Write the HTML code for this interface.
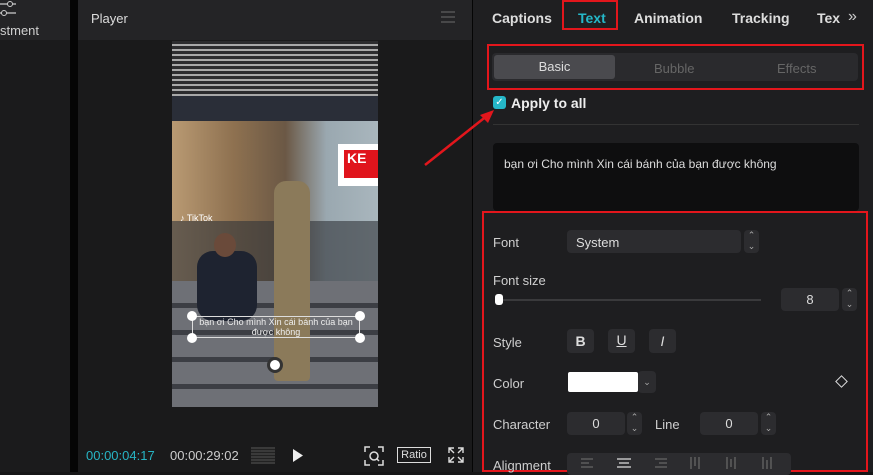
<!DOCTYPE html>
<html><head><meta charset="utf-8"><style>
*{margin:0;padding:0;box-sizing:border-box}
body{width:873px;height:472px;overflow:hidden;background:#161617;font-family:"Liberation Sans","DejaVu Sans",sans-serif;position:relative;color:#ddd}
.a{position:absolute}
.lbl{font-size:13px;color:#cfcfcf}
.box{background:#2c2c2f;border-radius:4px}
.red{border:2px solid #e3161c}
.spin{background:#2c2c2f;border-radius:4px;width:15px;height:23px;color:#aaa;font-size:9px;text-align:center;line-height:11px}
</style></head><body>
<div class="a" style="left:0;top:0;width:70px;height:40px;background:#242426"></div>
<div class="a" style="left:0;top:40px;width:70px;height:432px;background:#1b1b1c"></div>
<div class="a lbl" style="left:0;top:23px;font-size:13px">stment</div>
<svg class="a" style="left:0;top:0" width="20" height="18"><path d="M0 4H16M0 13H16" stroke="#ccc" stroke-width="1.2"/><circle cx="10" cy="4" r="2.5" fill="#242426" stroke="#ccc"/><circle cx="4" cy="13" r="2.5" fill="#242426" stroke="#ccc"/></svg>
<div class="a" style="left:70px;top:0;width:8px;height:472px;background:#050505"></div>
<div class="a" style="left:78px;top:0;width:394px;height:40px;background:#242426"></div>
<div class="a" style="left:78px;top:40px;width:394px;height:432px;background:#1a1a1b"></div>
<div class="a" style="left:91px;top:11px;font-size:13px;color:#ddd">Player</div>
<svg class="a" style="left:440px;top:10px" width="16" height="14"><path d="M1 2H15M1 7H15M1 12H15" stroke="#555" stroke-width="1.5"/></svg>
<div class="a" style="left:172px;top:41px;width:206px;height:366px;overflow:hidden;background:#555">
 <div class="a" style="left:0;top:0;width:206px;height:55px;background:repeating-linear-gradient(#2c2c2e 0 3px,#a8a8a8 3px 5px)"></div>
 <div class="a" style="left:0;top:55px;width:206px;height:25px;background:#2a2e38"></div>
 <div class="a" style="left:0;top:80px;width:206px;height:170px;background:linear-gradient(90deg,#b99a73 0,#8e7150 30%,#6b5845 55%,#9aa8b0 75%,#a9b6bd 100%)"></div>
 <div class="a" style="left:166px;top:103px;width:40px;height:42px;background:#fff"></div>
 <div class="a" style="left:172px;top:109px;width:34px;height:28px;background:#e0141c;color:#fff;font-weight:bold;font-size:14px;padding-left:3px">KE</div>
 <div class="a" style="left:0;top:180px;width:206px;height:60px;background:#303438;opacity:.6"></div>
 <div class="a" style="left:0;top:240px;width:206px;height:126px;background:repeating-linear-gradient(#6e7076 0 22px,#3c3e44 22px 27px)"></div>
 <div class="a" style="left:102px;top:140px;width:36px;height:200px;background:#8b7a5a;border-radius:12px 12px 4px 4px"></div>
 <div class="a" style="left:25px;top:210px;width:60px;height:70px;background:#1e2330;border-radius:16px"></div>
 <div class="a" style="left:42px;top:192px;width:22px;height:24px;background:#6a4a3a;border-radius:50%"></div>
 <div class="a" style="left:8px;top:172px;font-size:9px;color:#fff">♪ TikTok</div>
 <div class="a" style="left:20px;top:275px;width:168px;height:22px;border:1px solid #ddd;font-size:9px;color:#eee;text-align:center;line-height:10px">bạn ơi Cho mình Xin cái bánh của bạn được không</div>
 <div class="a" style="left:15px;top:270px;width:10px;height:10px;border-radius:50%;background:#fff"></div>
 <div class="a" style="left:183px;top:270px;width:10px;height:10px;border-radius:50%;background:#fff"></div>
 <div class="a" style="left:15px;top:292px;width:10px;height:10px;border-radius:50%;background:#fff"></div>
 <div class="a" style="left:183px;top:292px;width:10px;height:10px;border-radius:50%;background:#fff"></div>
 <div class="a" style="left:95px;top:316px;width:16px;height:16px;border-radius:50%;background:#fff;border:3px solid #333"></div>
</div>
<div class="a" style="left:86px;top:448px;font-size:13px;color:#27b4c4">00:00:04:17</div>
<div class="a" style="left:170px;top:448px;font-size:13px;color:#ccc">00:00:29:02</div>
<div class="a" style="left:251px;top:447px;width:24px;height:17px;background:repeating-linear-gradient(#3a3a3a 0 2px,#222 2px 3px)"></div>
<svg class="a" style="left:292px;top:448px" width="12" height="15"><path d="M1 1L11 7.5L1 14Z" fill="#eee"/></svg>
<svg class="a" style="left:364px;top:446px" width="20" height="20"><path d="M1 6V1H6M14 1H19V6M19 14V19H14M6 19H1V14" stroke="#ddd" fill="none" stroke-width="1.5"/><circle cx="10" cy="10" r="4" stroke="#ddd" fill="none" stroke-width="1.5"/><path d="M13 13L15 15" stroke="#ddd" stroke-width="1.5"/></svg>
<div class="a" style="left:397px;top:447px;width:34px;height:16px;border:1px solid #ddd;font-size:11px;color:#ddd;text-align:center;line-height:14px">Ratio</div>
<svg class="a" style="left:448px;top:447px" width="16" height="16"><path d="M1 6V1H6M1 1L6 6M10 1H15V6M15 1L10 6M15 10V15H10M15 15L10 10M6 15H1V10M1 15L6 10" stroke="#ddd" fill="none" stroke-width="1.4"/></svg>
<div class="a" style="left:472px;top:0;width:1px;height:472px;background:#050505"></div>
<div class="a" style="left:473px;top:0;width:400px;height:40px;background:#1f1f21"></div>
<div class="a" style="left:473px;top:40px;width:400px;height:432px;background:#1e1e20"></div>
<div class="a" style="left:492px;top:10px;font-size:14px;font-weight:bold;color:#ddd">Captions</div>
<div class="a red" style="left:562px;top:0;width:56px;height:30px"></div>
<div class="a" style="left:578px;top:10px;font-size:14px;font-weight:bold;color:#25b7c8">Text</div>
<div class="a" style="left:634px;top:10px;font-size:14px;font-weight:bold;color:#ddd">Animation</div>
<div class="a" style="left:732px;top:10px;font-size:14px;font-weight:bold;color:#ddd">Tracking</div>
<div class="a" style="left:817px;top:10px;font-size:14px;font-weight:bold;color:#ddd">Tex</div>
<div class="a" style="left:848px;top:8px;font-size:16px;color:#ccc">»</div>
<div class="a red" style="left:487px;top:44px;width:377px;height:46px"></div>
<div class="a" style="left:492px;top:53px;width:366px;height:28px;background:#2a2a2d;border-radius:4px"></div>
<div class="a" style="left:494px;top:55px;width:121px;height:24px;background:#4a4a4e;border-radius:3px;font-size:13px;color:#ddd;text-align:center;line-height:24px">Basic</div>
<div class="a" style="left:654px;top:61px;font-size:13px;color:#666">Bubble</div>
<div class="a" style="left:777px;top:61px;font-size:13px;color:#666">Effects</div>
<div class="a" style="left:493px;top:96px;width:13px;height:13px;background:#25b7c8;border-radius:3px;color:#fff;font-size:10px;line-height:13px;text-align:center">✓</div>
<div class="a" style="left:511px;top:95px;font-size:14px;font-weight:bold;color:#eee">Apply to all</div>
<div class="a" style="left:493px;top:124px;width:366px;height:1px;background:#333"></div>
<div class="a" style="left:493px;top:143px;width:366px;height:68px;background:#0e0e0f;border-radius:4px"></div>
<div class="a" style="left:504px;top:157px;font-size:12px;color:#ddd">bạn ơi Cho mình Xin cái bánh của bạn được không</div>
<div class="a red" style="left:482px;top:211px;width:386px;height:261px;border-bottom:2px solid #e3161c"></div>
<div class="a lbl" style="left:493px;top:235px">Font</div>
<div class="a box" style="left:567px;top:230px;width:174px;height:23px;font-size:13px;color:#ddd;padding:5px 9px">System</div>
<div class="a spin" style="left:744px;top:230px">⌃<br>⌄</div>
<div class="a lbl" style="left:493px;top:273px">Font size</div>
<div class="a" style="left:495px;top:299px;width:266px;height:2px;background:#3a3a3c"></div>
<div class="a" style="left:495px;top:294px;width:8px;height:11px;background:#fff;border-radius:3px"></div>
<div class="a box" style="left:781px;top:288px;width:58px;height:23px;font-size:13px;color:#ddd;text-align:center;line-height:23px">8</div>
<div class="a spin" style="left:842px;top:288px">⌃<br>⌄</div>
<div class="a lbl" style="left:493px;top:335px">Style</div>
<div class="a box" style="left:567px;top:329px;width:27px;height:24px;font-size:14px;font-weight:bold;color:#ddd;text-align:center;line-height:24px">B</div>
<div class="a box" style="left:608px;top:329px;width:27px;height:24px;font-size:14px;color:#ddd;text-align:center;line-height:22px;text-decoration:underline">U</div>
<div class="a box" style="left:649px;top:329px;width:27px;height:24px;font-size:14px;color:#ddd;text-align:center;line-height:24px;font-style:italic">I</div>
<div class="a lbl" style="left:493px;top:376px">Color</div>
<div class="a" style="left:568px;top:372px;width:70px;height:20px;background:#fff;border-radius:2px"></div>
<div class="a box" style="left:638px;top:371px;width:18px;height:22px;font-size:9px;color:#aaa;text-align:center;line-height:22px">⌄</div>
<div class="a" style="left:837px;top:377px;width:9px;height:9px;border:1.5px solid #ddd;transform:rotate(45deg)"></div>
<div class="a lbl" style="left:493px;top:417px">Character</div>
<div class="a box" style="left:567px;top:412px;width:58px;height:23px;font-size:13px;color:#ddd;text-align:center;line-height:23px">0</div>
<div class="a spin" style="left:627px;top:412px">⌃<br>⌄</div>
<div class="a lbl" style="left:655px;top:417px">Line</div>
<div class="a box" style="left:700px;top:412px;width:58px;height:23px;font-size:13px;color:#ddd;text-align:center;line-height:23px">0</div>
<div class="a spin" style="left:761px;top:412px">⌃<br>⌄</div>
<div class="a lbl" style="left:493px;top:458px">Alignment</div>
<div class="a box" style="left:567px;top:453px;width:224px;height:22px"></div>
<svg class="a" style="left:577px;top:456px" width="200" height="14"><g stroke="#666" stroke-width="1.3"><path d="M4 3H16M4 7H12M4 11H16"/><path d="M40 3H54M42 7H52M40 11H54" stroke="#ddd"/><path d="M78 3H90M82 7H90M78 11H90"/><path d="M114 1V13M118 1V10M122 1V13"/><path d="M150 1V13M154 3V11M158 1V13"/><path d="M186 1V13M190 4V13M194 1V13"/></g></svg>
<svg class="a" style="left:420px;top:105px" width="80" height="65"><path d="M5 60L68 10" stroke="#e3161c" stroke-width="2.5"/><path d="M74 5L60 10L68 18Z" fill="#e3161c"/></svg>
</body></html>
